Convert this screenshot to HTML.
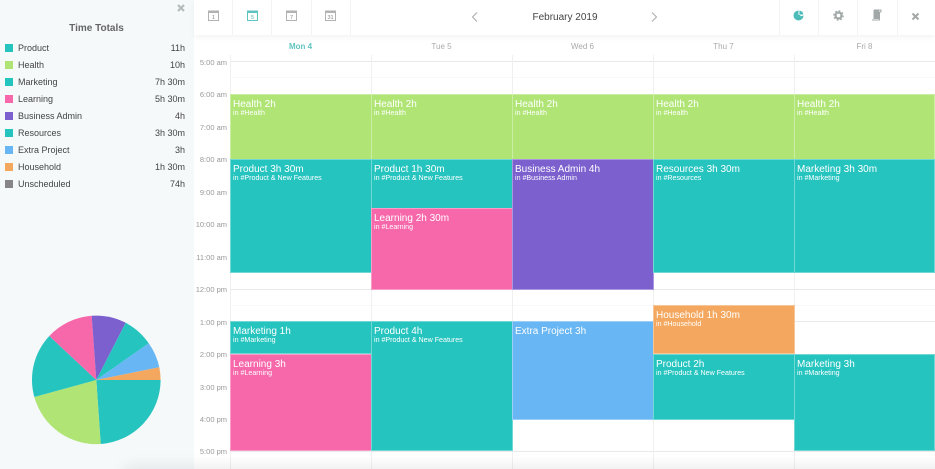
<!DOCTYPE html>
<html><head><meta charset="utf-8">
<style>
html,body{margin:0;padding:0;width:935px;height:469px;overflow:hidden;background:#fff;font-family:"Liberation Sans",Arial,sans-serif;}
*{box-sizing:border-box}
#wrap{position:absolute;left:0;top:0;width:935px;height:469px;overflow:hidden;filter:blur(.3px)}
.abs{position:absolute}
#side{position:absolute;left:0;top:0;width:194px;height:469px;background:#f5f9fa;}
.title{position:absolute;left:0;width:193px;top:23px;text-align:center;font-size:10px;line-height:12px;font-weight:bold;color:#666;}
.row{position:absolute;left:5px;width:180px;height:14px;font-size:9px;line-height:14px;color:#444;}
.row i{position:absolute;left:0;top:3px;width:8px;height:8px}
.row span{position:absolute;left:13px}
.row b{position:absolute;right:0;font-weight:normal}
.hl{position:absolute;left:230px;width:705px;height:1px;background:#e9e9e9}
.hh{position:absolute;left:230px;width:705px;height:1px;background:#f8f8f8}
.vl{position:absolute;top:55px;width:1px;height:414px;background:#f0f0f0}
.t{position:absolute;left:194px;width:33px;text-align:right;font-size:7.5px;line-height:10px;color:#999;white-space:nowrap}
.d{position:absolute;top:42px;width:141px;text-align:center;font-size:8px;line-height:10px;color:#aaa}
.e{position:absolute;color:#fff;border:1px solid rgba(255,255,255,.35);padding:4px 0 0 2px;overflow:hidden;white-space:nowrap}
.e p{margin:0;font-size:10px;line-height:12px}
.e small{display:block;font-size:7.1px;line-height:9px;margin-top:-2px;font-weight:normal}
.g{background:#b0e576}.c{background:#26c4bf}.p{background:#f768ab}.u{background:#7b60ce}.b{background:#68b6f3}.o{background:#f4a85f}
#bar{position:absolute;left:194px;top:0;width:741px;height:35px;background:#fff;box-shadow:0 2px 6px rgba(0,0,0,.05)}
.bd{position:absolute;top:0;width:1px;height:35px;background:#f3f3f3}
svg{position:absolute;display:block}
</style></head><body>
<div id="wrap">

<div id="side">
<svg style="left:177px;top:4px" width="8" height="8" viewBox="0 0 8 8"><path d="M1 1L7 7M7 1L1 7" stroke="#b5bcbc" stroke-width="2.2"/></svg>
<div class="title">Time Totals</div>
<div class="row" style="top:41px"><i class="c"></i><span>Product</span><b>11h</b></div>
<div class="row" style="top:58px"><i class="g"></i><span>Health</span><b>10h</b></div>
<div class="row" style="top:75px"><i class="c"></i><span>Marketing</span><b>7h 30m</b></div>
<div class="row" style="top:92px"><i class="p"></i><span>Learning</span><b>5h 30m</b></div>
<div class="row" style="top:109px"><i class="u"></i><span>Business Admin</span><b>4h</b></div>
<div class="row" style="top:126px"><i class="c"></i><span>Resources</span><b>3h 30m</b></div>
<div class="row" style="top:143px"><i class="b"></i><span>Extra Project</span><b>3h</b></div>
<div class="row" style="top:160px"><i class="o"></i><span>Household</span><b>1h 30m</b></div>
<div class="row" style="top:177px"><i style="background:#868686"></i><span>Unscheduled</span><b>74h</b></div>
<svg style="left:0;top:300px" width="194" height="169" viewBox="0 300 194 169">
<path fill="#26c4bf" d="M96.3 380L160.6 380A64.3 64.3 0 0 1 100.7 444Z"/>
<path fill="#b0e576" d="M96.3 380L100.7 444A64.3 64.3 0 0 1 34.3 397Z"/>
<path fill="#26c4bf" d="M96.3 380L34.3 397A64.3 64.3 0 0 1 49.3 336Z"/>
<path fill="#f768ab" d="M96.3 380L49.3 336A64.3 64.3 0 0 1 91.7 315.8Z"/>
<path fill="#7b60ce" d="M96.3 380L91.7 315.8A64.3 64.3 0 0 1 125.7 322.8Z"/>
<path fill="#26c4bf" d="M96.3 380L125.7 322.8A64.3 64.3 0 0 1 148.7 343.3Z"/>
<path fill="#68b6f3" d="M96.3 380L148.7 343.3A64.3 64.3 0 0 1 159.3 367.3Z"/>
<path fill="#f4a85f" d="M96.3 380L159.3 367.3A64.3 64.3 0 0 1 160.6 380Z"/>
</svg>
</div>

<div class="hl" style="top:61px"></div><div class="hh" style="top:77px"></div>
<div class="hl" style="top:94px"></div><div class="hl" style="top:289px"></div>
<div class="hh" style="top:305px"></div><div class="hl" style="top:321px"></div>
<div class="hl" style="top:354px"></div><div class="hl" style="top:451px"></div>
<div class="vl" style="left:230px"></div><div class="vl" style="left:371px"></div><div class="vl" style="left:512px"></div><div class="vl" style="left:653px"></div><div class="vl" style="left:794px"></div>

<div class="t" style="top:58px">5:00 am</div><div class="t" style="top:90px">6:00 am</div><div class="t" style="top:123px">7:00 am</div><div class="t" style="top:155px">8:00 am</div><div class="t" style="top:188px">9:00 am</div><div class="t" style="top:220px">10:00 am</div><div class="t" style="top:253px">11:00 am</div><div class="t" style="top:285px">12:00 pm</div><div class="t" style="top:318px">1:00 pm</div><div class="t" style="top:350px">2:00 pm</div><div class="t" style="top:383px">3:00 pm</div><div class="t" style="top:415px">4:00 pm</div><div class="t" style="top:447px">5:00 pm</div>

<div class="d" style="left:230px;color:#5fc4c0;font-weight:bold">Mon 4</div><div class="d" style="left:371px">Tue 5</div><div class="d" style="left:512px">Wed 6</div><div class="d" style="left:653px">Thu 7</div><div class="d" style="left:794px">Fri 8</div>

<div class="e g" style="left:230px;top:94px;width:142px;height:66px"><p>Health 2h</p><small>in #Health</small></div>
<div class="e g" style="left:371px;top:94px;width:142px;height:66px"><p>Health 2h</p><small>in #Health</small></div>
<div class="e g" style="left:512px;top:94px;width:142px;height:66px"><p>Health 2h</p><small>in #Health</small></div>
<div class="e g" style="left:653px;top:94px;width:142px;height:66px"><p>Health 2h</p><small>in #Health</small></div>
<div class="e g" style="left:794px;top:94px;width:141px;height:66px"><p>Health 2h</p><small>in #Health</small></div>

<div class="e c" style="left:230px;top:159px;width:142px;height:114px"><p>Product 3h 30m</p><small>in #Product &amp; New Features</small></div>
<div class="e c" style="left:230px;top:321px;width:142px;height:33px"><p>Marketing 1h</p><small>in #Marketing</small></div>
<div class="e p" style="left:230px;top:354px;width:142px;height:97px"><p>Learning 3h</p><small>in #Learning</small></div>

<div class="e c" style="left:371px;top:159px;width:142px;height:50px"><p>Product 1h 30m</p><small>in #Product &amp; New Features</small></div>
<div class="e p" style="left:371px;top:208px;width:142px;height:82px"><p>Learning 2h 30m</p><small>in #Learning</small></div>
<div class="e c" style="left:371px;top:321px;width:142px;height:130px"><p>Product 4h</p><small>in #Product &amp; New Features</small></div>

<div class="e u" style="left:512px;top:159px;width:142px;height:131px"><p>Business Admin 4h</p><small>in #Business Admin</small></div>
<div class="e b" style="left:512px;top:321px;width:142px;height:99px"><p>Extra Project 3h</p></div>

<div class="e c" style="left:653px;top:159px;width:142px;height:114px"><p>Resources 3h 30m</p><small>in #Resources</small></div>
<div class="e o" style="left:653px;top:305px;width:142px;height:49px"><p>Household 1h 30m</p><small>in #Household</small></div>
<div class="e c" style="left:653px;top:354px;width:142px;height:66px"><p>Product 2h</p><small>in #Product &amp; New Features</small></div>

<div class="e c" style="left:794px;top:159px;width:141px;height:114px"><p>Marketing 3h 30m</p><small>in #Marketing</small></div>
<div class="e c" style="left:794px;top:354px;width:141px;height:97px"><p>Marketing 3h</p><small>in #Marketing</small></div>

<div class="abs" style="left:125px;top:470px;width:830px;height:10px;box-shadow:0 -1px 16px rgba(0,0,0,.13)"></div>

<div id="bar">
<div class="bd" style="left:38px"></div><div class="bd" style="left:77px"></div><div class="bd" style="left:117px"></div><div class="bd" style="left:156px"></div>
<div class="bd" style="left:585px"></div><div class="bd" style="left:624px"></div><div class="bd" style="left:663px"></div><div class="bd" style="left:703px"></div>
</div>

<svg style="left:208px;top:10px" width="11" height="11" viewBox="0 0 11 11"><rect x=".5" y="1" width="10" height="9.5" fill="#fff" stroke="#b2b2b2"/><rect x=".5" y="1" width="10" height="2" fill="#b2b2b2"/><text x="5.5" y="9" font-size="5.5" text-anchor="middle" fill="#888" font-family="Liberation Sans">1</text></svg>
<svg style="left:247px;top:10px" width="11" height="11" viewBox="0 0 11 11"><rect x=".5" y="1" width="10" height="9.5" fill="#fff" stroke="#5fc4c0"/><rect x=".5" y="1" width="10" height="2" fill="#5fc4c0"/><text x="5.5" y="9" font-size="5.5" text-anchor="middle" fill="#4fb0ac" font-family="Liberation Sans">5</text></svg>
<svg style="left:286px;top:10px" width="11" height="11" viewBox="0 0 11 11"><rect x=".5" y="1" width="10" height="9.5" fill="#fff" stroke="#b2b2b2"/><rect x=".5" y="1" width="10" height="2" fill="#b2b2b2"/><text x="5.5" y="9" font-size="5.5" text-anchor="middle" fill="#888" font-family="Liberation Sans">7</text></svg>
<svg style="left:325px;top:10px" width="11" height="11" viewBox="0 0 11 11"><rect x=".5" y="1" width="10" height="9.5" fill="#fff" stroke="#b2b2b2"/><rect x=".5" y="1" width="10" height="2" fill="#b2b2b2"/><text x="5.5" y="9" font-size="5.5" text-anchor="middle" fill="#888" font-family="Liberation Sans">31</text></svg>

<svg style="left:471px;top:11px" width="8" height="12" viewBox="0 0 8 12"><path d="M6 1.5L1.5 6L6 10.5" fill="none" stroke="#aaa" stroke-width="1"/></svg>
<div class="abs" style="left:495px;top:12px;width:140px;text-align:center;font-size:10px;line-height:12px;color:#444">February 2019</div>
<svg style="left:650px;top:11px" width="8" height="12" viewBox="0 0 8 12"><path d="M2 1.5L6.5 6L2 10.5" fill="none" stroke="#aaa" stroke-width="1"/></svg>

<svg style="left:793px;top:10px" width="11" height="11" viewBox="0 0 11 11"><path d="M5.5 .5A5 5 0 1 0 10.5 5.5L7.5 6.3L7 4.5L5.5 5Z" fill="#4dbcb8"/><path d="M6.4 .6A4.6 4.6 0 0 1 10.4 4.4L7.6 4.6L6.4 3.6Z" fill="#4dbcb8"/></svg>
<svg style="left:833px;top:10px" width="11" height="11" viewBox="0 0 11 11"><circle cx="5.5" cy="5.5" r="3" fill="none" stroke="#a2a8a8" stroke-width="2.2"/><circle cx="5.5" cy="5.5" r="4.6" fill="none" stroke="#a2a8a8" stroke-width="1.4" stroke-dasharray="1.8 1.8"/></svg>
<svg style="left:871px;top:9px" width="11" height="13" viewBox="0 0 11 13"><path d="M3 1H10V3H8.5V11H1M3 1V10" fill="none" stroke="#a2a8a8" stroke-width="1"/><rect x="3.5" y="1.5" width="4.5" height="8.5" fill="#a2a8a8"/></svg>
<svg style="left:911px;top:12px" width="9" height="9" viewBox="0 0 9 9"><path d="M1.5 1.5L7.5 7.5M7.5 1.5L1.5 7.5" stroke="#a2a8a8" stroke-width="2"/></svg>
</div>
</body></html>
